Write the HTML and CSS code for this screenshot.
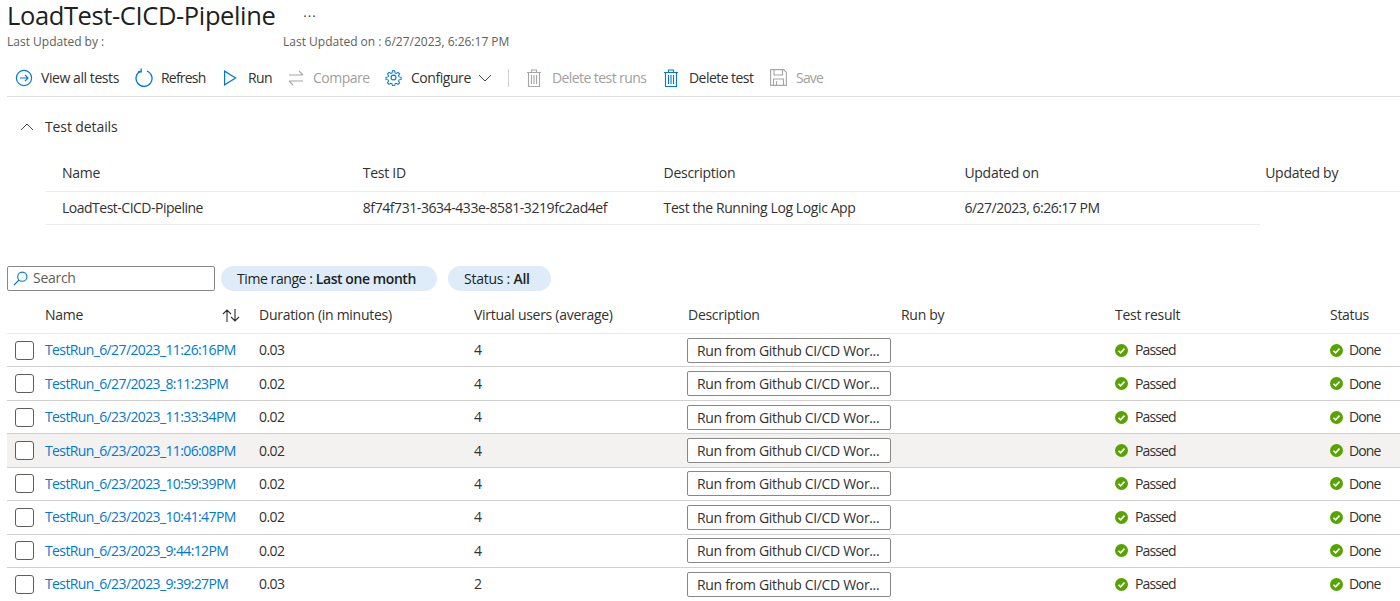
FILE: index.html
```html
<!DOCTYPE html>
<html lang="en">
<head>
<meta charset="utf-8">
<title>LoadTest-CICD-Pipeline</title>
<link rel="stylesheet" href="styles.css">
</head>
<body>
<header class="head">
  <div class="title-row"><h1>LoadTest-CICD-Pipeline</h1><span class="more">···</span></div>
  <div class="meta"><span class="meta-by">Last Updated by :</span><span>Last Updated on : 6/27/2023, 6:26:17 PM</span></div>
</header>
<nav class="toolbar">
  <span class="tool t-view"><svg width="18" height="18" viewBox="0 0 18 18" fill="none" stroke="#0078d4" stroke-width="1.2"><circle cx="9" cy="9" r="7.6"/><path d="M4.8 9h8M10 5.9 13 9l-3 3.1"/></svg>View all tests</span>
  <span class="tool t-refresh"><svg width="18" height="20" viewBox="0 0 18 20" fill="none" stroke="#0078d4" stroke-width="1.3"><path d="M5.6 3.2A8 8 0 1 0 12 3"/><path d="M6.2 0.6v3.2H2.8"/></svg>Refresh</span>
  <span class="tool t-run"><svg width="14" height="16" viewBox="0 0 14 16" fill="none" stroke="#0078d4" stroke-width="1.2"><path d="M1.6 1.2v13.6L12.6 8z"/></svg>Run</span>
  <span class="tool t-compare off"><svg width="16" height="16" viewBox="0 0 16 16" fill="none" stroke="#a6a6a6" stroke-width="1.1"><path d="M1 5h14M11 1l4 4M15 11H1M5 15l-4-4"/></svg>Compare</span>
  <span class="tool t-config"><svg width="17" height="17" viewBox="0 0 24 24" fill="none" stroke="#0078d4" stroke-width="1.6"><circle cx="12" cy="12" r="3.4"/><path d="M10.2 1.5h3.6l.6 3.2 2 .9 2.8-1.8 2.5 2.5-1.8 2.8.8 2 3.3.6v3.4l-3.3.7-.8 1.9 1.8 2.8-2.5 2.5-2.8-1.8-2 .8-.6 3.2h-3.6l-.6-3.2-2-.8-2.8 1.8-2.5-2.5 1.8-2.8-.8-1.9-3.3-.7v-3.4l3.3-.6.8-2-1.8-2.8 2.5-2.5 2.8 1.8 2-.9z" transform="translate(1.4 1.3) scale(.89)"/></svg>Configure<svg class="chev" width="14" height="8" viewBox="0 0 14 8" fill="none" stroke="#444" stroke-width="1"><path d="M1 1l6 6 6-6"/></svg></span>
  <span class="sep"></span>
  <span class="tool t-delruns off"><svg width="14" height="18" viewBox="0 0 14 18" fill="none" stroke="#a6a6a6" stroke-width="1.1"><path d="M0 3.5h14M4.500 3.500V1h5v2.500M1.500 3.500v14h11v-14M4.500 6v9M7 6v9M9.500 6v9"/></svg>Delete test runs</span>
  <span class="tool t-del"><svg width="14" height="18" viewBox="0 0 14 18" fill="none" stroke="#0078d4" stroke-width="1.1"><path d="M0 3.5h14M4.500 3.500V1h5v2.500M1.500 3.500v14h11v-14M4.500 6v9M7 6v9M9.500 6v9"/></svg>Delete test</span>
  <span class="tool t-save off"><svg width="17" height="17" viewBox="0 0 17 17" fill="none" stroke="#a6a6a6" stroke-width="1.1"><path d="M.6.6h13l2.800 2.800v13H.6zM4 .6v5.400h8.500V.6M3.500 16.400V10h10v6.400M6.500 12v4.400"/></svg>Save</span>
</nav>
<section class="details">
  <div class="details-head"><svg width="14" height="8" viewBox="0 0 14 8" fill="none" stroke="#444" stroke-width="1"><path d="M1 7l6-6 6 6"/></svg><span class="d-title">Test details</span></div>
  <div class="d-row d-top"><span>Name</span><span>Test ID</span><span>Description</span><span>Updated on</span><span>Updated by</span></div>
  <div class="d-row d-body"><span>LoadTest-CICD-Pipeline</span><span class="d-id">8f74f731-3634-433e-8581-3219fc2ad4ef</span><span class="d-desc">Test the Running Log Logic App</span><span>6/27/2023, 6:26:17 PM</span></div>
</section>
<section class="filters">
  <div class="search"><svg width="15" height="15" viewBox="0 0 15 15" fill="none" stroke="#0078d4" stroke-width="1.1"><circle cx="9.300" cy="5.700" r="4.600"/><path d="M6 9 1 14"/></svg><span>Search</span></div>
  <span class="pill p-time">Time range : <b>Last one month</b></span>
  <span class="pill p-status">Status : <b>All</b></span>
</section>
<section class="runs">
  <div class="r-head"><span class="c-name">Name<svg class="sort" width="18" height="13" viewBox="0 0 18 13" fill="none" stroke="#323130" stroke-width="1.1"><path d="M5 13V1M1 5l4-4 4 4M13 0v12M9 8l4 4 4-4"/></svg></span><span>Duration (in minutes)</span><span>Virtual users (average)</span><span>Description</span><span>Run by</span><span>Test result</span><span>Status</span></div>
  <div id="rows"></div>
</section>
<script src="app.js"></script>
</body>
</html>
```

FILE: app.js
```js
var data = [
  ["TestRun_6/27/2023_11:26:16PM", "0.03", 4],
  ["TestRun_6/27/2023_8:11:23PM", "0.02", 4],
  ["TestRun_6/23/2023_11:33:34PM", "0.02", 4],
  ["TestRun_6/23/2023_11:06:08PM", "0.02", 4],
  ["TestRun_6/23/2023_10:59:39PM", "0.02", 4],
  ["TestRun_6/23/2023_10:41:47PM", "0.02", 4],
  ["TestRun_6/23/2023_9:44:12PM", "0.02", 4],
  ["TestRun_6/23/2023_9:39:27PM", "0.03", 2]
];
var ok = '<svg width="13" height="13" viewBox="0 0 13 13"><circle cx="6.500" cy="6.500" r="6.500" fill="#57a300"/><path d="M3.500 6.700 5.600 8.800 9.500 4.600" fill="none" stroke="#fff" stroke-width="1.600"/></svg>';
document.getElementById("rows").innerHTML = data.map(function (d, i) {
  return '<div class="r-row' + (i === 3 ? ' hover' : '') + '">' +
    '<span class="check"></span>' +
    '<a class="link">' + d[0] + '</a>' +
    '<span class="num">' + d[1] + '</span><span class="num">' + d[2] + '</span>' +
    '<span><span class="desc">Run from Github CI/CD Wor...</span></span><span></span>' +
    '<span class="st">' + ok + 'Passed</span><span class="st st-done">' + ok + 'Done</span></div>';
}).join("");
```

FILE: styles.css
```css
* { box-sizing: border-box; }
html, body { margin: 0; height: 601px; overflow: hidden; }
body { background: #fff; color: #323130; font: 14px/20px "Open Sans", "Noto Sans", sans-serif; letter-spacing: -.28px; }
svg { flex: none; display: block; }

.head { padding: 0 0 0 7px; height: 55px; }
.title-row { display: flex; align-items: center; height: 31px; }
h1 { margin: 0; font-size: 25.5px; line-height: 31px; font-weight: 400; color: #201f1e; letter-spacing: -.38px; }
.more { margin-left: 28px; font-size: 13px; line-height: 12px; color: #323130; letter-spacing: 1px; }
.meta { display: flex; font-size: 12px; line-height: 16px; color: #605e5c; margin-top: 3px; letter-spacing: 0; }
.meta-by { width: 276px; }

.toolbar { display: flex; align-items: center; height: 42px; margin-left: 7px; padding: 4px 0 0 8px; border-bottom: 1px solid #e1dfdd; }
.tool { display: flex; align-items: center; gap: 8px; white-space: nowrap; }
.off { color: #a19f9d; }
.t-view { width: 120px; letter-spacing: -.43px; }
.t-refresh { width: 88px; letter-spacing: -.8px; }
.t-run { width: 65px; gap: 11px; letter-spacing: -.6px; }
.t-compare { width: 97px; gap: 9px; letter-spacing: -.5px; }
.t-config { width: 123px; gap: 9px; letter-spacing: -.45px; }
.chev { margin-left: -2px; }
.sep { width: 1px; height: 18px; background: #d2d0ce; margin-right: 18px; }
.t-delruns { width: 137px; gap: 11px; letter-spacing: -.58px; }
.t-del { width: 106px; gap: 11px; letter-spacing: -.55px; }
.t-save { gap: 9px; letter-spacing: -.8px; }

.details { padding-left: 20px; }
.details-head { display: flex; align-items: center; gap: 11px; height: 60px; }
.d-title { letter-spacing: -.1px; }
.d-row { display: grid; grid-template-columns: repeat(4, 300.8px) 1fr; margin-left: 25px; padding-left: 17px; white-space: nowrap; }
.d-top { height: 35px; align-items: center; border-bottom: 1px solid #edebe9; padding-bottom: 3px; }
.d-body { height: 33px; align-items: center; width: 1215px; border-bottom: 1px solid #edebe9; letter-spacing: -.5px; }
.d-body .d-id { letter-spacing: -.43px; }
.d-body .d-desc { letter-spacing: -.4px; }

.filters { display: flex; align-items: center; gap: 11px; margin: 40px 0 0 7px; height: 26px; }
.search { display: flex; align-items: center; gap: 5px; width: 208px; height: 25px; padding-left: 5px; border: 1px solid #8a8886; border-radius: 2px; color: #605e5c; margin-right: -5px; }
.pill { height: 25px; line-height: 25px; padding: 0 16px; border-radius: 13px; background: #deecf9; color: #201f1e; white-space: nowrap; letter-spacing: -.42px; }
.pill b { font-weight: 600; }
.p-time { width: 216px; }
.p-status { width: 103px; letter-spacing: -.25px; }

.runs { margin: 6px 0 0 7px; }
.r-head, .r-row { display: grid; grid-template-columns: 38px 214px 215px 214px 213px 214px 215px 1fr; align-items: center; white-space: nowrap; }
.r-head { height: 37px; border-bottom: 1px solid #edebe9; }
.r-head .c-name { grid-column: 2; display: flex; align-items: center; justify-content: space-between; padding-right: 19px; }
.r-row { height: 33.45px; border-bottom: 1px solid #d2d0ce; }
.r-row:last-child { border-bottom-color: #edebe9; }
.hover { background: #f3f2f1; }
.check { width: 19px; height: 19px; margin-left: 8px; border: 1px solid #605e5c; border-radius: 3px; background: #fff; }
.link { color: #0078d4; letter-spacing: -.62px; }
.num { letter-spacing: -.6px; }
.desc { display: block; width: 204px; height: 25px; line-height: 23px; padding-left: 9px; margin-left: -1px; background: #fff; border: 1px solid #8a8886; border-radius: 2px; letter-spacing: -.33px; }
.st { display: flex; align-items: center; gap: 7px; letter-spacing: -.9px; }
.st-done { gap: 6px; }
```
